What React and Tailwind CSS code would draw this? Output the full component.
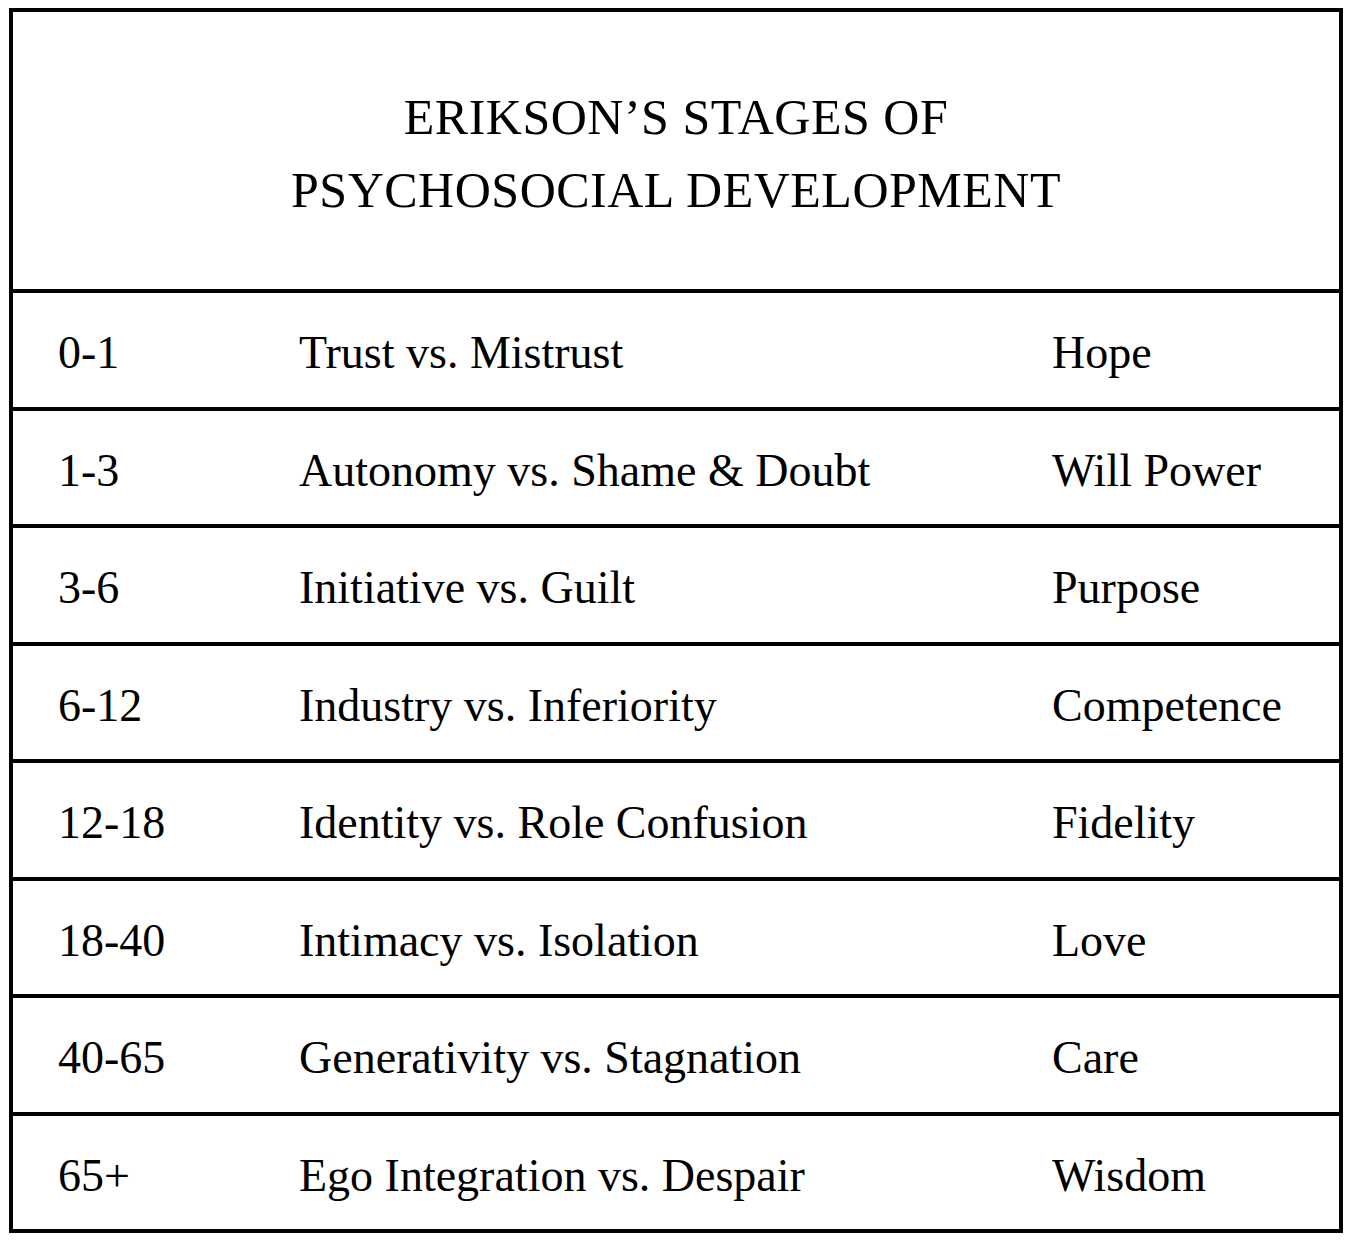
import React from "react";

const rows = [
  ["0-1", "Trust vs. Mistrust", "Hope"],
  ["1-3", "Autonomy vs. Shame & Doubt", "Will Power"],
  ["3-6", "Initiative vs. Guilt", "Purpose"],
  ["6-12", "Industry vs. Inferiority", "Competence"],
  ["12-18", "Identity vs. Role Confusion", "Fidelity"],
  ["18-40", "Intimacy vs. Isolation", "Love"],
  ["40-65", "Generativity vs. Stagnation", "Care"],
  ["65+", "Ego Integration vs. Despair", "Wisdom"],
];

export default function App() {
  return (
    <div className="w-[1350px] h-[1240px] bg-white pt-[8px] pl-[9px]" style={{ fontFamily: '"Liberation Serif", "DejaVu Serif", serif' }}>
      <div className="w-[1334px] border-4 border-black text-black">
        <div className="h-[277px] flex flex-col items-center justify-center pt-[6px] text-[50px] leading-[73px] tracking-[0.5px]">
          <div>ERIKSON’S STAGES OF</div>
          <div>PSYCHOSOCIAL DEVELOPMENT</div>
        </div>
        {rows.map((r, i) => (
          <div key={i} className="h-[117.5px] border-t-4 border-black flex items-center pt-[6px] text-[46px]">
            <div className="w-[286px] pl-[45px]">{r[0]}</div>
            <div className="w-[753px]">{r[1]}</div>
            <div>{r[2]}</div>
          </div>
        ))}
      </div>
    </div>
  );
}
